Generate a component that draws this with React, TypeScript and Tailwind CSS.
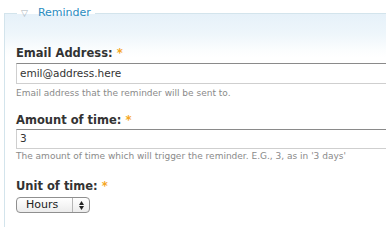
import React from "react";

function Label({ children }: { children: React.ReactNode }) {
  return (
    <div className="text-[11.5px] font-bold text-[#333] leading-[14px]">
      {children} <span className="text-[#f5a623]">*</span>
    </div>
  );
}

export default function App() {
  return (
    <div
      className="w-[386px] h-[227px] overflow-hidden bg-white pt-[5px] pl-[4px]"
      style={{ fontFamily: '"DejaVu Sans", Verdana, sans-serif' }}
    >
      <fieldset className="border-0 border-t border-l border-[#d3e4ec] w-[420px] h-[260px] m-0 pl-[11px] pt-0 bg-[linear-gradient(to_bottom,#e6f1f9_0px,#eef6fb_20px,#fbfdfe_36px,#ffffff_44px)]">
        <legend className="ml-[1px] px-[4px] flex items-center gap-[10px] text-[11px] text-[#2a8cbf] leading-[16px]">
          <span className="text-[9px] text-[#aab4bb]">▽</span>
          <span>Reminder</span>
        </legend>

        <div className="mt-[25px]">
          <Label>Email Address:</Label>
          <div className="mt-[3px] h-[21px] border border-[#cfcfcf] border-t-[#8a8a8a] border-r-0 bg-white flex items-center pl-[3px] text-[10.5px] text-[#333]">
            emil@address.here
          </div>
          <div className="mt-[3px] text-[9px] text-[#8a8a8a] leading-[12px]">
            Email address that the reminder will be sent to.
          </div>
        </div>

        <div className="mt-[14px]">
          <Label>Amount of time:</Label>
          <div className="mt-[2px] h-[20px] border border-[#cfcfcf] border-t-[#8a8a8a] border-r-0 bg-white flex items-center pl-[3px] text-[10.5px] text-[#333]">
            3
          </div>
          <div className="mt-[1px] text-[9px] text-[#8a8a8a] leading-[12px]">
            The amount of time which will trigger the reminder. E.G., 3, as in '3 days'
          </div>
        </div>

        <div className="mt-[17px]">
          <Label>Unit of time:</Label>
          <div className="mt-[4px] w-[74px] h-[16px] rounded-[4px] border border-[#8f8f8f] bg-[linear-gradient(to_bottom,#ffffff,#ececec)] flex items-center text-[11px] text-[#222]">
            <span className="flex-1 pl-[9px] leading-[14px]">Hours</span>
            <span className="w-[17px] h-full border-l border-[#b5b5b5] flex flex-col items-center justify-center gap-[1px]">
              <svg width="5" height="4" viewBox="0 0 5 4"><path d="M2.5 0L5 4H0z" fill="#222" /></svg>
              <svg width="5" height="4" viewBox="0 0 5 4"><path d="M0 0h5L2.5 4z" fill="#222" /></svg>
            </span>
          </div>
        </div>
      </fieldset>
    </div>
  );
}
